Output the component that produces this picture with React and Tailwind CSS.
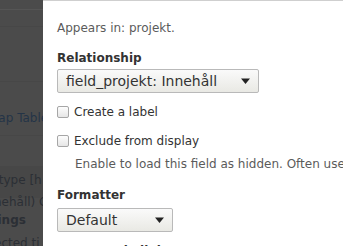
const font = { fontFamily: '"DejaVu Sans", Verdana, sans-serif' };

const Select = ({ value, width }) => (
  <div
    className={`flex items-center justify-between h-[24px] ${width} rounded-[2px] border border-[#b9b9b9] bg-gradient-to-b from-[#fafafa] to-[#e9e9e4] pl-[8px] pr-[8px]`}
  >
    <span className="text-[14px] leading-none text-[#333]">{value}</span>
    <svg width="9" height="6" viewBox="0 0 9 6">
      <path d="M0 0.5h9L4.5 6z" fill="#222" />
    </svg>
  </div>
);

const Checkbox = ({ label }) => (
  <label className="flex items-center gap-[5px] h-[16px]">
    <span className="w-[12px] h-[12px] rounded-[2px] border border-[#a6a6a6] bg-gradient-to-b from-[#fdfdfd] to-[#e6e6e6]" />
    <span className="text-[12px] leading-none text-[#333]">{label}</span>
  </label>
);

export default function App() {
  return (
    <div className="flex w-[343px] h-[246px] overflow-hidden bg-white" style={font}>
      <div className="relative w-[43px] shrink-0 bg-[#4b4b4b] overflow-hidden">
        <div className="absolute left-0 right-0 top-[9px] h-px bg-[#555]" />
        <div className="absolute left-0 right-0 top-[26px] h-px bg-[#474747]" />
        <div className="absolute left-0 right-0 top-[81px] h-px bg-[#474747]" />
        <div className="absolute left-0 right-0 top-[135px] h-px bg-[#474747]" />
        <div className="absolute left-0 right-0 top-[166px] h-[32px] bg-[#474747]" />
        <div className="absolute left-[-12px] top-[109px] whitespace-nowrap text-[12px] text-[#243447]">
          Map Table
        </div>
        <div className="absolute left-[-16px] top-[171px] whitespace-nowrap text-[12px] text-[#2b2f35]">
          ld type [h
        </div>
        <div className="absolute left-[-6px] top-[193px] whitespace-nowrap text-[12px] text-[#2b2f35]">
          nehåll) C
        </div>
        <div className="absolute left-[-14px] top-[211px] whitespace-nowrap text-[12px] font-bold text-[#2b2f35]">
          ttings
        </div>
        <div className="absolute left-[-6px] top-[234px] whitespace-nowrap text-[12px] text-[#2b2f35]">
          ected ti
        </div>
      </div>
      <div className="flex-1 flex flex-col">
        <div className="h-[2px] bg-[#f4f4f4] border-b border-[#cfcfcf] box-content" />
        <div className="flex flex-col pl-[14px] pt-[20px]">
          <p className="text-[12px] leading-[14px] text-[#5b5b5b] whitespace-nowrap">Appears in: projekt.</p>
          <p className="mt-[16px] text-[12px] leading-[14px] font-bold text-[#333]">Relationship</p>
          <div className="mt-[4px]">
            <Select value="field_projekt: Innehåll" width="w-[202px]" />
          </div>
          <div className="mt-[11px]">
            <Checkbox label="Create a label" />
          </div>
          <div className="mt-[13px]">
            <Checkbox label="Exclude from display" />
          </div>
          <p className="mt-[8px] pl-[18px] text-[12px] leading-[14px] text-[#5b5b5b] whitespace-nowrap">
            Enable to load this field as hidden. Often used to group fields.
          </p>
          <p className="mt-[17px] text-[12px] leading-[14px] font-bold text-[#333]">Formatter</p>
          <div className="mt-[6px]">
            <Select value="Default" width="w-[116px]" />
          </div>
          <p className="mt-[12px] text-[12px] leading-[14px] font-bold text-[#333] whitespace-nowrap">Image style link</p>
        </div>
      </div>
    </div>
  );
}
